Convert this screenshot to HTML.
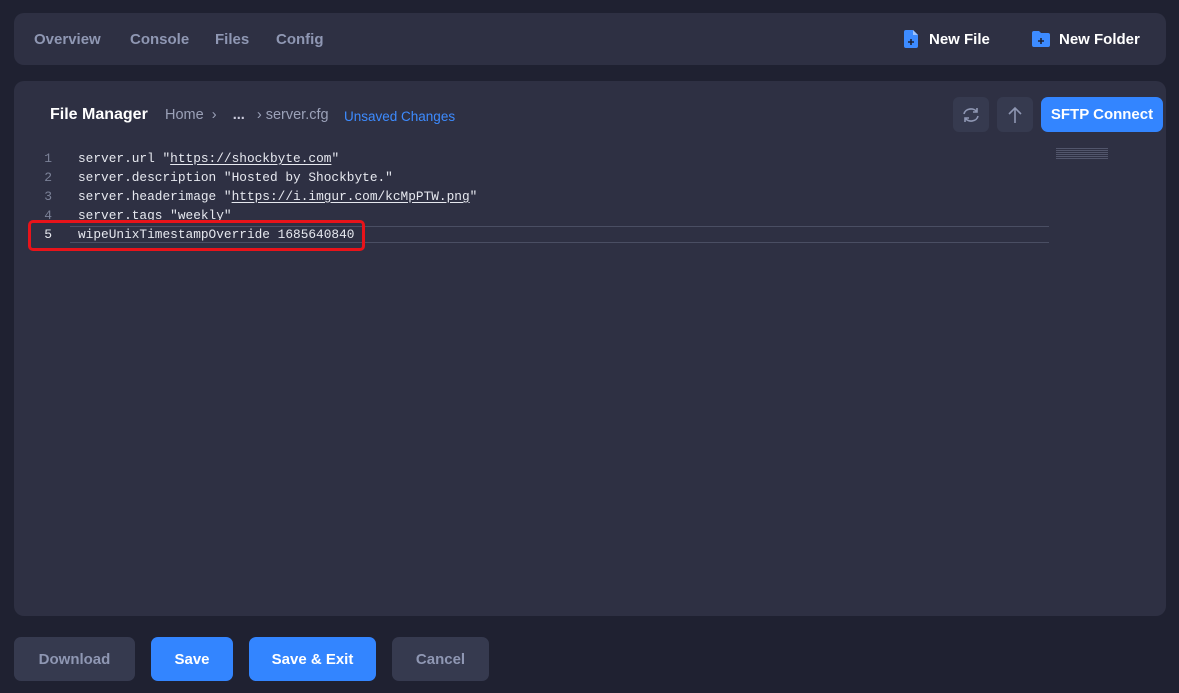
<!DOCTYPE html>
<html><head><style>
body{margin:0;width:1179px;height:693px;background:#1f2131;font-family:"Liberation Sans",sans-serif;position:relative;overflow:hidden}
.p{position:absolute;background:#2e3043;border-radius:10px}
.nav{position:absolute;top:31px;color:#8f97b3;font-size:15px;font-weight:bold}
.w{position:absolute;color:#fff;font-weight:bold;font-size:15px}
.btn{position:absolute;top:637px;height:44px;border-radius:7px;display:flex;align-items:center;justify-content:center;font-weight:bold;font-size:15px}
.g{background:#363a4f;color:#8f97b3}.b{background:#3385ff;color:#fff}
.code{position:absolute;left:0;font-family:"Liberation Mono","DejaVu Sans Mono",monospace;font-size:12.8px;color:#e6e8ef;white-space:pre}
.ln{position:absolute;left:36px;width:16px;text-align:right;font-family:"Liberation Mono",monospace;font-size:13px;color:#7c8298}
u{text-decoration:underline;text-underline-offset:2px}
</style></head><body>
<div class="p" style="left:14px;top:13px;width:1152px;height:52px"></div>
<div class="nav" style="left:34px">Overview</div>
<div class="nav" style="left:130px">Console</div>
<div class="nav" style="left:215px">Files</div>
<div class="nav" style="left:276px">Config</div>
<svg style="position:absolute;left:904px;top:30px" width="14" height="18"><path d="M0 2Q0 0 2 0H9L14 5V16Q14 18 12 18H2Q0 18 0 16Z" fill="#3d8bff"/><path d="M9 0V5H14" fill="#9cc3ff"/><path d="M7 9V15M4 12H10" stroke="#1f2131" stroke-width="1.6"/></svg>
<div class="w" style="left:929px;top:31px">New File</div>
<svg style="position:absolute;left:1032px;top:31px" width="18" height="16"><path d="M0 2Q0 0 2 0H7L9 2H16Q18 2 18 4V14Q18 16 16 16H2Q0 16 0 14Z" fill="#3d8bff"/><path d="M9 7V13M6 10H12" stroke="#1f2131" stroke-width="1.6"/></svg>
<div class="w" style="left:1059px;top:31px">New Folder</div>

<div class="p" style="left:14px;top:81px;width:1152px;height:535px"></div>
<div class="w" style="left:50px;top:106px;font-size:16px">File Manager</div>
<div style="position:absolute;left:165px;top:107px;color:#9ba1b8;font-size:14.5px">Home &nbsp;›&nbsp;&nbsp;&nbsp; <b style="color:#ccd">...</b> &nbsp;&nbsp;›&nbsp;server.cfg</div>
<div style="position:absolute;left:344px;top:109px;color:#3d8bff;font-size:13.5px">Unsaved Changes</div>
<div style="position:absolute;left:953px;top:97px;width:36px;height:35px;background:#363a4f;border-radius:6px"></div>
<svg style="position:absolute;left:961px;top:105px" width="20" height="20" fill="none" stroke="#8f97b3" stroke-width="1.6"><path d="M3 9A7 6 0 0 1 16 7M16 3V7H12M17 11A7 6 0 0 1 4 13M4 17V13H8"/></svg>
<div style="position:absolute;left:997px;top:97px;width:36px;height:35px;background:#363a4f;border-radius:6px"></div>
<svg style="position:absolute;left:1005px;top:105px" width="20" height="20" fill="none" stroke="#8f97b3" stroke-width="1.6"><path d="M10 18V3M4 9L10 3L16 9"/></svg>
<div class="btn b" style="left:1041px;top:97px;width:122px;height:35px">SFTP Connect</div>

<div style="position:absolute;left:1056px;top:148px;width:52px;height:12px;background:repeating-linear-gradient(#6a7088 0 1px,transparent 1px 2px);opacity:.6"></div>
<div style="position:absolute;left:70px;top:226px;width:979px;height:15px;border-top:1px solid #4a4e63;border-bottom:1px solid #4a4e63"></div>
<div class="ln" style="top:151px">1</div><div class="code" style="left:78px;top:151px">server.url "<u>https://shockbyte.com</u>"</div>
<div class="ln" style="top:170px">2</div><div class="code" style="left:78px;top:170px">server.description "Hosted by Shockbyte."</div>
<div class="ln" style="top:189px">3</div><div class="code" style="left:78px;top:189px">server.headerimage "<u>https://i.imgur.com/kcMpPTW.png</u>"</div>
<div class="ln" style="top:208px">4</div><div class="code" style="left:78px;top:208px">server.tags "weekly"</div>
<div class="ln" style="top:227px;color:#e6e8ef">5</div><div class="code" style="left:78px;top:227px">wipeUnixTimestampOverride 1685640840</div>
<div style="position:absolute;left:28px;top:220px;width:331px;height:25px;border:3px solid #e8131a;border-radius:5px"></div>

<div class="btn g" style="left:14px;width:121px">Download</div>
<div class="btn b" style="left:151px;width:82px">Save</div>
<div class="btn b" style="left:249px;width:127px">Save &amp; Exit</div>
<div class="btn g" style="left:392px;width:97px">Cancel</div>
</body></html>
